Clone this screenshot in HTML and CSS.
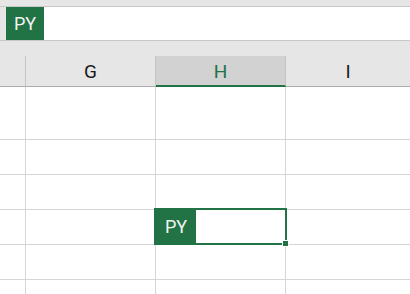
FILE: index.html
```html
<!DOCTYPE html>
<html>
<head>
<meta charset="utf-8">
<link rel="stylesheet" href="styles.css">
</head>
<body>
<div class="app">
  <div class="formula-bar">
    <div class="py-badge">PY</div>
    <div class="formula-input"></div>
  </div>
  <div class="sheet">
    <div class="col-headers">
      <div class="hcell corner"></div>
      <div class="hcell">G</div>
      <div class="hcell active">H</div>
      <div class="hcell last">I</div>
    </div>
    <div class="grid">
      <div class="row tall"><div class="cell first"></div><div class="cell"></div><div class="cell"></div><div class="cell last"></div></div>
      <div class="row"><div class="cell first"></div><div class="cell"></div><div class="cell"></div><div class="cell last"></div></div>
      <div class="row"><div class="cell first"></div><div class="cell"></div><div class="cell"></div><div class="cell last"></div></div>
      <div class="row"><div class="cell first"></div><div class="cell"></div><div class="cell"></div><div class="cell last"></div></div>
      <div class="row"><div class="cell first"></div><div class="cell"></div><div class="cell"></div><div class="cell last"></div></div>
      <div class="row"><div class="cell first"></div><div class="cell"></div><div class="cell"></div><div class="cell last"></div></div>
      <div class="selection">
        <div class="py-badge cell-badge">PY</div>
        <div class="fill-handle"></div>
      </div>
    </div>
  </div>
</div>
</body>
</html>
```

FILE: styles.css
```css
html, body {
  margin: 0;
  padding: 0;
}
body {
  width: 410px;
  height: 294px;
  overflow: hidden;
  font-family: Roboto, "Open Sans", "Liberation Sans", sans-serif;
}
.app {
  width: 410px;
  height: 294px;
  background: #e6e6e6;
  padding-top: 6px;
  box-sizing: border-box;
  display: flex;
  flex-direction: column;
  overflow: hidden;
}
.formula-bar {
  flex: none;
  display: flex;
  height: 35px;
  box-sizing: border-box;
  border-top: 1px solid #c8c8c8;
  border-bottom: 1px solid #c8c8c8;
  padding-left: 6px;
}
.py-badge {
  background: #217346;
  color: #f2f2f2;
  font-size: 18px;
  display: flex;
  align-items: center;
  justify-content: center;
}
.formula-bar .py-badge {
  width: 38px;
}
.formula-input {
  flex: 1;
  background: #ffffff;
}
.sheet {
  margin-top: 15px;
  flex: 1;
  min-height: 0;
  display: flex;
  flex-direction: column;
}
.col-headers {
  flex: none;
  display: flex;
  height: 31px;
}
.hcell {
  box-sizing: border-box;
  width: 130px;
  flex: none;
  border-right: 1px solid #c4c4c4;
  border-bottom: 1px solid #acacac;
  display: flex;
  align-items: center;
  justify-content: center;
  font-size: 19px;
  color: #1a1a1a;
  padding-top: 1px;
}
.hcell.corner {
  width: 26px;
}
.hcell.active {
  background: #d2d2d2;
  color: #217346;
  border-bottom: 2px solid #217346;
  padding-top: 2px;
}
.hcell.last {
  flex: 1;
  border-right: none;
}
.grid {
  position: relative;
  flex: 1;
  min-height: 0;
  background: #ffffff;
}
.row {
  display: flex;
  height: 35px;
}
.row.tall {
  height: 53px;
}
.cell {
  box-sizing: border-box;
  width: 130px;
  flex: none;
  border-right: 1px solid #d6d6d6;
  border-bottom: 1px solid #d6d6d6;
}
.cell.first {
  width: 26px;
}
.cell.last {
  flex: 1;
  border-right: none;
}
.selection {
  position: absolute;
  left: 154px;
  top: 121px;
  width: 133px;
  height: 37px;
  box-sizing: border-box;
  border: 2px solid #217346;
  display: flex;
}
.cell-badge {
  width: 40px;
  height: 100%;
}
.fill-handle {
  position: absolute;
  right: -4px;
  bottom: -4px;
  width: 5px;
  height: 5px;
  background: #217346;
  border: 1px solid #ffffff;
}
```
